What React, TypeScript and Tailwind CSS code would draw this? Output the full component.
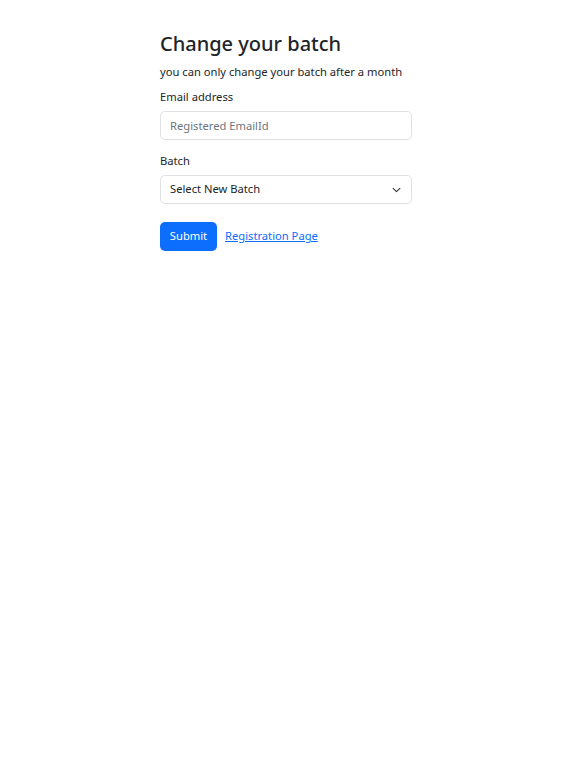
export default function App() {
  return (
    <div className="min-h-screen bg-white text-[#212529] font-['Noto_Sans',sans-serif]">
      <form className="ml-[160px] w-[252px] pt-[31px]">
        <h3 className="mb-[7px] text-[20px] leading-[25px] font-medium">Change your batch</h3>
        <p className="mb-[7px] whitespace-nowrap text-[11.2px] leading-[18px]">
          you can only change your batch after a month
        </p>
        <div className="mb-[12px]">
          <label htmlFor="email" className="mb-[5px] block text-[11.2px] leading-[18px]">
            Email address
          </label>
          <input
            id="email"
            type="email"
            placeholder="Registered EmailId"
            className="block h-[29px] w-full rounded-[5px] border border-[#dee2e6] px-[9px] text-[11.2px] placeholder:text-[#6c757d] focus:outline-none"
          />
        </div>
        <div className="mb-[12px]">
          <label htmlFor="batch" className="mb-[5px] block text-[11.2px] leading-[18px]">
            Batch
          </label>
          <div className="relative">
            <select
              id="batch"
              className="block h-[29px] w-full appearance-none rounded-[5px] border border-[#dee2e6] bg-white px-[9px] text-[11.2px] focus:outline-none"
            >
              <option>Select New Batch</option>
            </select>
            <svg
              className="pointer-events-none absolute right-[11px] top-1/2 -translate-y-1/2"
              width="9"
              height="9"
              viewBox="0 0 16 16"
              fill="none"
              stroke="#343a40"
              strokeWidth="2"
              strokeLinecap="round"
              strokeLinejoin="round"
            >
              <path d="m2 5 6 6 6-6" />
            </svg>
          </div>
        </div>
        <div className="flex items-center gap-[8px] pt-[6px]">
          <button
            type="button"
            className="h-[29px] w-[57px] rounded-[5px] bg-[#0d6efd] text-[11.2px] text-white"
          >
            Submit
          </button>
          <a href="#" className="text-[11.2px] text-[#0d6efd] underline">
            Registration Page
          </a>
        </div>
      </form>
    </div>
  );
}
